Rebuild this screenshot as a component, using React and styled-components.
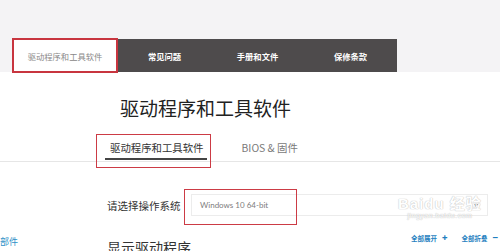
import React from "react";
import styled, { createGlobalStyle } from "styled-components";

const GlobalStyle = createGlobalStyle`
  html, body {
    margin: 0;
    padding: 0;
    background: #ffffff;
    overflow: hidden;
  }
  body {
    width: 500px;
    height: 251px;
    font-family: "Noto Sans CJK SC", "Noto Sans", sans-serif;
  }
`;

const Page = styled.div`
  position: relative;
  width: 500px;
  height: 251px;
  overflow: hidden;
`;

const TopBand = styled.div`
  height: 72px;
  box-sizing: border-box;
  padding: 39px 0 0 12px;
  background: #f4f3f5;
`;

const NavBar = styled.nav`
  display: flex;
  width: 385px;
  height: 33px;
  background: #4e4b4c;
`;

const NavItem = styled.div`
  box-sizing: border-box;
  width: ${(p) => (p.$active ? "106px" : "93px")};
  height: ${(p) => (p.$active ? "35px" : "33px")};
  margin-top: ${(p) => (p.$active ? "-1px" : "0")};
  display: flex;
  align-items: center;
  justify-content: center;
  font-size: 8.3px;
  font-weight: ${(p) => (p.$active ? 400 : 700)};
  color: ${(p) => (p.$active ? "#8a8888" : "#ffffff")};
  background: ${(p) => (p.$active ? "#ffffff" : "transparent")};
  border: ${(p) => (p.$active ? "2px solid #c8353f" : "none")};
`;

const Heading = styled.h1`
  margin: 26px 0 0 120px;
  font-size: 19px;
  line-height: 19px;
  font-weight: 400;
  color: #222;
`;

const TabRow = styled.div`
  display: flex;
  align-items: flex-end;
  gap: 30px;
  margin-top: 24px;
  padding-left: 105px;
  border-bottom: 1px solid #e6e6e6;
`;

const Tab = styled.div`
  position: relative;
  padding: 0 3px 3px 5px;
  font-size: 10.4px;
  line-height: 14px;
  color: ${(p) => (p.$active ? "#333" : "#7a7a7a")};
  border-bottom: 2px solid ${(p) => (p.$active ? "#444" : "transparent")};
  margin-bottom: 1px;

  &::after {
    content: "";
    display: ${(p) => (p.$marked ? "block" : "none")};
    position: absolute;
    left: -9px;
    top: -7px;
    width: 115px;
    height: 34px;
    box-sizing: border-box;
    border: 1.5px solid #cc3b45;
  }
`;

const SelectRow = styled.div`
  display: flex;
  align-items: center;
  margin-top: 32px;
  padding-left: 107px;
`;

const Label = styled.div`
  width: 84px;
  font-size: 10.5px;
  color: #333;
`;

const Select = styled.div`
  position: relative;
  box-sizing: border-box;
  width: 297px;
  height: 22px;
  display: flex;
  align-items: center;
  justify-content: space-between;
  padding: 0 8px;
  border: 1px solid #ececec;
  font-family: Lato, "Open Sans", sans-serif;
  font-size: 8px;
  color: #7d7d7d;

  &::after {
    content: "";
    position: absolute;
    left: -8px;
    top: -6px;
    width: 113px;
    height: 36px;
    box-sizing: border-box;
    border: 1.5px solid #cc3b45;
  }
`;

const Caret = styled.span`
  width: 0;
  height: 0;
  margin-right: 1px;
  border-left: 2.5px solid transparent;
  border-right: 2.5px solid transparent;
  border-top: 3.5px solid #333;
`;

const Bottom = styled.div`
  display: flex;
  justify-content: flex-end;
  gap: 14px;
  margin-top: 15px;
  padding-right: 2px;
`;

const Toggle = styled.span`
  font-size: 6.5px;
  font-weight: 700;
  color: #1f7fbf;

  b {
    margin-left: 5px;
    font-size: 9px;
  }
`;

const Content = styled.div`
  display: flex;
  align-items: flex-start;
  margin-top: -6px;
`;

const SideLink = styled.div`
  width: 107px;
  font-size: 9px;
  line-height: 11px;
  color: #2b8fc7;
  margin-top: -2px;
`;

const SectionTitle = styled.div`
  font-size: 14px;
  line-height: 16px;
  color: #333;
  margin-top: 1px;
`;

const Watermark = styled.div`
  position: absolute;
  left: 398px;
  top: 195px;
  display: flex;
  flex-direction: column;
  align-items: center;
  white-space: nowrap;
  pointer-events: none;
  color: #fff;
  opacity: 0.9;
  text-shadow: 0 0 1px #bdbdbd, 0 0 1px #bdbdbd;
`;

const MarkMain = styled.div`
  font-family: "Liberation Sans", "Noto Sans CJK SC", sans-serif;
  font-size: 15px;
  font-weight: 700;
  line-height: 17px;
  letter-spacing: 1px;
`;

const MarkSub = styled.div`
  font-family: "Liberation Sans", sans-serif;
  font-size: 7px;
  line-height: 8px;
  letter-spacing: 0.5px;
`;

export default function App() {
  return (
    <>
      <GlobalStyle />
      <Page>
        <TopBand>
          <NavBar>
            <NavItem $active>驱动程序和工具软件</NavItem>
            <NavItem>常见问题</NavItem>
            <NavItem>手册和文件</NavItem>
            <NavItem>保修条款</NavItem>
          </NavBar>
        </TopBand>
        <Heading>驱动程序和工具软件</Heading>
        <TabRow>
          <Tab $active $marked>驱动程序和工具软件</Tab>
          <Tab>BIOS &amp; 固件</Tab>
        </TabRow>
        <SelectRow>
          <Label>请选择操作系统</Label>
          <Select>
            <span>Windows 10 64-bit</span>
            <Caret />
          </Select>
        </SelectRow>
        <Bottom>
          <Toggle>全部展开<b>+</b></Toggle>
          <Toggle>全部折叠<b>−</b></Toggle>
        </Bottom>
        <Content>
          <SideLink>部件</SideLink>
          <SectionTitle>显示驱动程序</SectionTitle>
        </Content>
        <Watermark>
          <MarkMain>Baidu 经验</MarkMain>
          <MarkSub>jingyan.baidu.com</MarkSub>
        </Watermark>
      </Page>
    </>
  );
}
